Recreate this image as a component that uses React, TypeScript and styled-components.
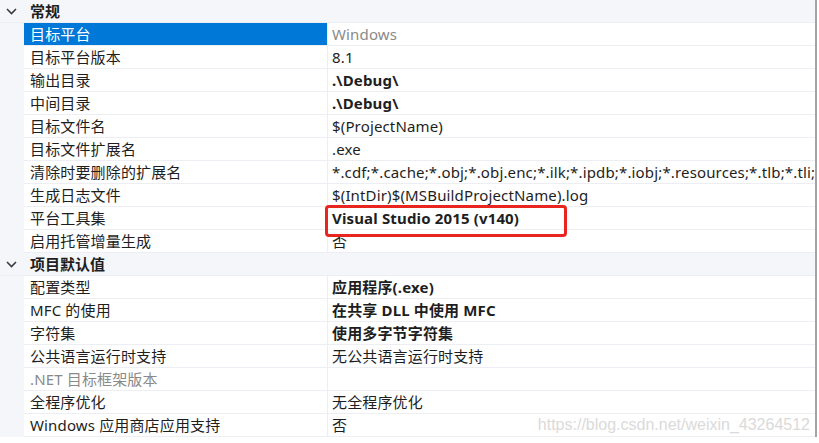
import React from "react";
import styled, { createGlobalStyle } from "styled-components";

const GlobalStyle = createGlobalStyle`
  html, body {
    margin: 0;
    padding: 0;
    background: #ffffff;
  }
  body {
    font-family: "Noto Sans", "Noto Sans CJK SC", sans-serif;
    font-size: 15px;
    color: #1e1e1e;
  }
`;

const Page = styled.div`
  position: relative;
  width: 819px;
  height: 443px;
  overflow: hidden;
  background: #ffffff;
`;

const Grid = styled.div`
  width: 815px;
  border-right: 2px solid #a3a3a3;
  display: flex;
  flex-direction: column;
`;

const SectionHead = styled.div`
  display: flex;
  align-items: center;
  height: 22px;
  background: #f4f6fa;
  border-bottom: 1px solid #eceef3;
`;

const Chevron = styled.span`
  width: 24px;
  height: 22px;
  display: flex;
  align-items: center;
  justify-content: center;
  padding-right: 2px;
  box-sizing: border-box;
`;

const SectionTitle = styled.span`
  padding-left: 6px;
  font-weight: 700;
  font-family: "Noto Sans CJK SC", sans-serif;
  font-size: 15px;
  line-height: 22px;
`;

const Row = styled.div`
  display: grid;
  grid-template-columns: 24px 304px 1fr;
  height: 23px;
`;

const Gutter = styled.div`
  background: #f4f6fa;
`;

const Cell = styled.div<{ $selected?: boolean; $dim?: boolean; $bold?: boolean }>`
  position: relative;
  display: flex;
  align-items: center;
  padding-left: 6px;
  white-space: nowrap;
  overflow: hidden;
  box-sizing: border-box;
  border-bottom: 1px solid #eceef3;
  font-weight: ${(p) => (p.$selected ? 400 : p.$bold ? 700 : 400)};
  color: ${(p) => (p.$selected ? "#ffffff" : p.$dim ? "#8a8a8a" : "#1e1e1e")};
  background: ${(p) => (p.$selected ? "#0078d7" : "#ffffff")};
  line-height: 22px;
  letter-spacing: 0.15px;
`;

const NameCell = styled(Cell)`
  border-right: 1px solid #eceef3;
`;

const ValueCell = styled(Cell)`
  padding-left: 4px;
  overflow: visible;
`;

const Highlight = styled.div`
  position: absolute;
  z-index: 5;
  left: -3px;
  top: -2px;
  width: 242px;
  height: 32px;
  box-sizing: border-box;
  border: 3px solid #e8261f;
  border-radius: 4px;
  pointer-events: none;
`;

const ValueClip = styled.div`
  position: absolute;
  inset: 0 0 0 4px;
  display: flex;
  align-items: center;
  overflow: hidden;
`;

const Watermark = styled.div`
  position: absolute;
  z-index: 6;
  right: 9px;
  bottom: 9px;
  font-family: "Liberation Sans", Arial, sans-serif;
  font-size: 16px;
  color: #dadada;
`;

type Prop = {
  name: string;
  value: string;
  selected?: boolean;
  dimName?: boolean;
  dimValue?: boolean;
  bold?: boolean;
  mark?: boolean;
  clip?: boolean;
};

const general: Prop[] = [
  { name: "目标平台", value: "Windows", selected: true, dimValue: true },
  { name: "目标平台版本", value: "8.1" },
  { name: "输出目录", value: ".\\Debug\\", bold: true },
  { name: "中间目录", value: ".\\Debug\\", bold: true },
  { name: "目标文件名", value: "$(ProjectName)" },
  { name: "目标文件扩展名", value: ".exe" },
  {
    name: "清除时要删除的扩展名",
    value: "*.cdf;*.cache;*.obj;*.obj.enc;*.ilk;*.ipdb;*.iobj;*.resources;*.tlb;*.tli;*",
    clip: true,
  },
  { name: "生成日志文件", value: "$(IntDir)$(MSBuildProjectName).log" },
  { name: "平台工具集", value: "Visual Studio 2015 (v140)", bold: true, mark: true },
  { name: "启用托管增量生成", value: "否" },
];

const defaults: Prop[] = [
  { name: "配置类型", value: "应用程序(.exe)", bold: true },
  { name: "MFC 的使用", value: "在共享 DLL 中使用 MFC", bold: true },
  { name: "字符集", value: "使用多字节字符集", bold: true },
  { name: "公共语言运行时支持", value: "无公共语言运行时支持" },
  { name: ".NET 目标框架版本", value: "", dimName: true },
  { name: "全程序优化", value: "无全程序优化" },
  { name: "Windows 应用商店应用支持", value: "否" },
];

function ChevronIcon() {
  return (
    <svg width="11" height="7" viewBox="0 0 11 7">
      <path d="M1 1 L5.5 5.5 L10 1" fill="none" stroke="#3a3a3a" strokeWidth="1.6" />
    </svg>
  );
}

function Section({ title, rows }: { title: string; rows: Prop[] }) {
  return (
    <>
      <SectionHead>
        <Chevron>
          <ChevronIcon />
        </Chevron>
        <SectionTitle>{title}</SectionTitle>
      </SectionHead>
      {rows.map((r, i) => (
        <Row key={i}>
          <Gutter />
          <NameCell $selected={r.selected} $dim={r.dimName}>
            {r.name}
          </NameCell>
          <ValueCell $dim={r.dimValue} $bold={r.bold}>
            {r.clip ? <ValueClip>{r.value}</ValueClip> : r.value}
            {r.mark && <Highlight />}
          </ValueCell>
        </Row>
      ))}
    </>
  );
}

export default function App() {
  return (
    <Page>
      <GlobalStyle />
      <Grid>
        <Section title="常规" rows={general} />
        <Section title="项目默认值" rows={defaults} />
      </Grid>
      <Watermark>https://blog.csdn.net/weixin_43264512</Watermark>
    </Page>
  );
}
